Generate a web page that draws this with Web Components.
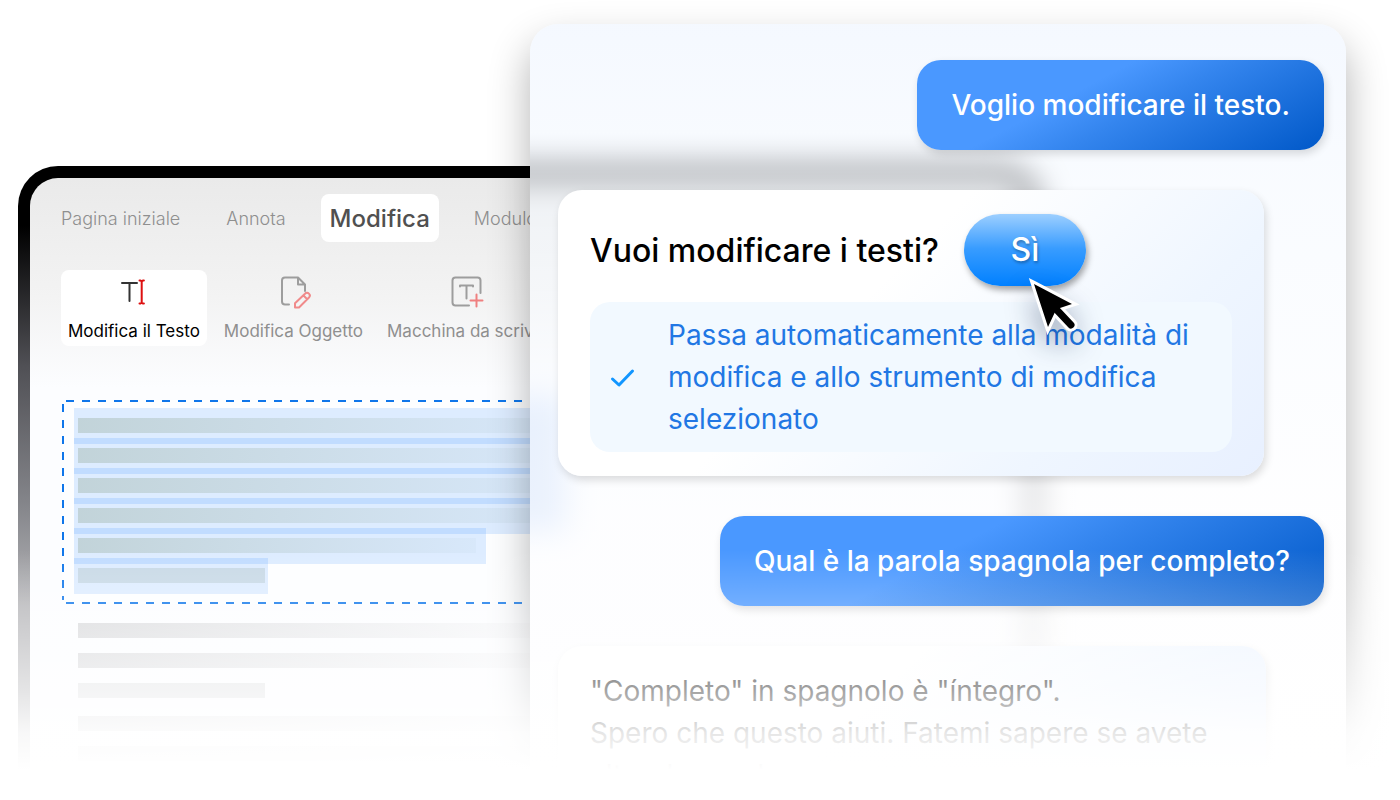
<!DOCTYPE html>
<html lang="it">
<head>
<meta charset="utf-8">
<meta name="viewport" content="width=device-width, initial-scale=1">
<title>Assistente PDF</title>
<style>
    body {
        margin: 0;
        background: #fff;
        font-family: Inter, "Liberation Sans", sans-serif;
    }
</style>
</head>
<body>
<promo-stage>
    <tablet-frame slot="device">
        <ribbon-tab slot="tabs">Pagina iniziale</ribbon-tab>
        <ribbon-tab slot="tabs">Annota</ribbon-tab>
        <ribbon-tab slot="tabs" active>Modifica</ribbon-tab>
        <ribbon-tab slot="tabs">Modulo</ribbon-tab>

        <tool-button slot="tools" icon="text" active>Modifica il Testo</tool-button>
        <tool-button slot="tools" icon="object">Modifica Oggetto</tool-button>
        <tool-button slot="tools" icon="typewriter">Macchina da scrivere</tool-button>

        <page-preview></page-preview>
    </tablet-frame>

    <chat-panel slot="chat">
        <chat-bubble>Voglio modificare il testo.</chat-bubble>
        <confirm-card action="Sì">
            <span slot="question">Vuoi modificare i testi?</span>
            Passa automaticamente alla modalità di modifica e allo strumento di modifica selezionato
        </confirm-card>
        <chat-bubble>Qual è la parola spagnola per completo?</chat-bubble>
        <chat-answer>"Completo" in spagnolo è "íntegro".<br>Spero che questo aiuti. Fatemi sapere se avete altre domande.</chat-answer>
    </chat-panel>
</promo-stage>

<script>
class BaseElement extends HTMLElement {
    constructor() {
        super();
        this.attachShadow({ mode: "open" });
    }

    connectedCallback() {
        this.shadowRoot.innerHTML = this.template();
    }
}

// Tablet and chat share one grid row and overlap in the middle column
class PromoStage extends BaseElement {
    template() {
        return `
            <style>
                :host {
                    display: grid;
                    grid-template-columns: 18px 512fr 510fr 306fr 54px;
                    grid-template-rows: minmax(0, 1fr);
                    height: 100vh;
                    overflow: hidden;
                }
                slot[name="device"]::slotted(*) {
                    grid-area: 1 / 2 / 2 / 4;
                    margin-top: 166px;
                }
                slot[name="chat"]::slotted(*) {
                    grid-area: 1 / 3 / 2 / 5;
                    margin-top: 24px;
                }
                .fade {
                    grid-area: 1 / 1 / 2 / -1;
                    align-self: end;
                    z-index: 2;
                    height: 250px;
                    pointer-events: none;
                    background: linear-gradient(
                        rgba(255, 255, 255, 0),
                        rgba(255, 255, 255, .22) 22%,
                        rgba(255, 255, 255, .64) 56%,
                        rgba(255, 255, 255, .9) 73%,
                        #fff 88%);
                }
            </style>
            <slot name="device"></slot>
            <slot name="chat"></slot>
            <div class="fade"></div>
        `;
    }
}

class TabletFrame extends BaseElement {
    template() {
        return `
            <style>
                :host {
                    display: block;
                    box-sizing: border-box;
                    min-width: 0;
                    padding: 12px 12px 0;
                    border-radius: 40px 40px 0 0;
                    background: linear-gradient(#000 60px, #505055 200px, #85868b 340px, #b5b5b8 440px);
                }
                .screen {
                    box-sizing: border-box;
                    height: 100%;
                    padding: 16px 32px 0 31px;
                    overflow: hidden;
                    border-radius: 28px 28px 0 0;
                    background: linear-gradient(#eaeaea, #f3f3f3 120px, #fcfdff 210px);
                }
                nav, .tools {
                    display: flex;
                    white-space: nowrap;
                }
                nav {
                    gap: 24px;
                    margin-left: -11px;
                }
                .tools {
                    gap: 10px;
                    margin: 28px 0 54px;
                }
            </style>
            <div class="screen">
                <nav><slot name="tabs"></slot></nav>
                <div class="tools"><slot name="tools"></slot></div>
                <slot></slot>
            </div>
        `;
    }
}

class RibbonTab extends BaseElement {
    template() {
        return `
            <style>
                :host { display: block; }
                button {
                    display: block;
                    padding: 2px 11px 0;
                    border: 0;
                    background: none;
                    color: #8f8f8f;
                    font: 300 18px/46px Inter, "Liberation Sans", sans-serif;
                }
                :host([active]) button {
                    padding: 2px 9px 0;
                    border-radius: 8px;
                    background: #fff;
                    color: #505050;
                    font-size: 24px;
                    font-weight: 500;
                }
            </style>
            <button type="button"><slot></slot></button>
        `;
    }
}

const TOOL_ICONS = {
    text: `
        <path d="M6 9h15M13.500 9v18" stroke="#333"/>
        <path d="M23.500 6.500h1l1.200 1 1.200-1h1M25.700 7.500v21M23.500 29.500h1l1.200-1 1.200 1h1" stroke="#dd1010"/>`,
    object: `
        <path d="M14 30.500h-4a3 3 0 0 1-3-3V6.500a3 3 0 0 1 3-3h13l7 7V17M23 3.500v7h7" stroke="#9d9d9d"/>
        <path d="M20 33.500v-4.200l10-9.600a2.700 2.700 0 0 1 4 3.800L24 33.500zM28.500 21.500l3.500 3.500" stroke="#f08a8a"/>`,
    typewriter: `
        <path d="M20 31.500H6.500a3 3 0 0 1-3-3V6.500a3 3 0 0 1 3-3h22a3 3 0 0 1 3 3V19" stroke="#9d9d9d"/>
        <path d="M11 12.500v-1h13v1M17.500 11.500v13" stroke="#9d9d9d"/>
        <path d="M27.500 20.500v12M21.500 26.500h12" stroke="#ef8080"/>`
};

class ToolButton extends BaseElement {
    template() {
        return `
            <style>
                :host { display: block; }
                button {
                    display: flex;
                    flex-direction: column;
                    align-items: center;
                    gap: 11px;
                    padding: 4px 7px 5px;
                    border: 0;
                    border-radius: 8px;
                    background: none;
                    color: #8f8f8f;
                    font: 400 17px/20px Inter, "Liberation Sans", sans-serif;
                }
                :host([active]) button {
                    background: #fff;
                    color: #000;
                }
                span {
                    max-width: 160px;
                    overflow: hidden;
                }
                svg {
                    width: 36px;
                    height: 36px;
                    fill: none;
                    stroke-width: 2;
                    stroke-linecap: round;
                    stroke-linejoin: round;
                }
            </style>
            <button type="button">
                <svg viewBox="0 0 36 36" aria-hidden="true">${TOOL_ICONS[this.getAttribute("icon")] || ""}</svg>
                <span><slot></slot></span>
            </button>
        `;
    }
}

// Placeholder page: a selected paragraph, then plain ones
class PagePreview extends BaseElement {
    template() {
        const selected = ["full", "full", "full", "full", "long", "short"];
        const plain = ["full", "full", "short", "full gap", "full"];

        return `
            <style>
                :host { display: block; }
                .selection {
                    width: 54%;
                    box-sizing: border-box;
                    margin-left: 1px;
                    padding: 8px 0 10px 12px;
                    background:
                        repeating-linear-gradient(90deg, #0f76ea 0 8px, transparent 8px 16px) 4px 0 / 100% 2px no-repeat,
                        repeating-linear-gradient(90deg, #0f76ea 0 8px, transparent 8px 16px) 4px 100% / 100% 2px no-repeat,
                        repeating-linear-gradient(#0f76ea 0 8px, transparent 8px 16px) 0 4px / 2px calc(100% - 8px) no-repeat,
                        #fdfeff;
                }
                .line {
                    box-sizing: border-box;
                    height: 36px;
                    margin-top: -6px;
                    padding: 10px 0 11px 4px;
                    background: rgba(0, 111, 255, .127);
                }
                .line:first-child { margin-top: 0; }
                .line.long { width: 412px; padding-right: 10px; }
                .line.short { width: 194px; padding-right: 3px; }
                .line i {
                    display: block;
                    height: 15px;
                    background: linear-gradient(100deg, rgba(60, 90, 30, .17), rgba(60, 110, 110, .03));
                }
                .line.short i { background: rgba(60, 90, 60, .13); }
                .plain {
                    display: grid;
                    gap: 15px;
                    width: 54%;
                    margin: 19px 0 0 17px;
                }
                .plain i {
                    height: 15px;
                    background: linear-gradient(95deg, rgba(30, 30, 34, .16), rgba(30, 30, 34, 0));
                }
                .plain .short {
                    width: 187px;
                    background: rgba(30, 30, 34, .12);
                }
                .plain .gap { margin-top: 3px; }
            </style>
            <div class="selection">
                ${selected.map(w => `<div class="line ${w}"><i></i></div>`).join("")}
            </div>
            <div class="plain">
                ${plain.map(w => `<i class="${w}"></i>`).join("")}
            </div>
        `;
    }
}

class ChatPanel extends BaseElement {
    template() {
        return `
            <style>
                :host {
                    display: flex;
                    flex-direction: column;
                    gap: 40px;
                    position: relative;
                    z-index: 1;
                    box-sizing: border-box;
                    min-width: 0;
                    padding: 36px 22px 0 28px;
                    border-radius: 28px 28px 0 0;
                    background: #fff;
                    box-shadow: 0 20px 40px rgba(0, 0, 0, .3);
                }
                /* frosted glass: a blurred outline of the tablet under a tint */
                .glass {
                    position: absolute;
                    z-index: -1;
                    inset: 0;
                    overflow: hidden;
                    border-radius: inherit;
                }
                .ghost {
                    position: absolute;
                    inset: 142px 37.5% -60px -60px;
                    padding: 12px 12px 0 0;
                    border-radius: 0 40px 0 0;
                    background: linear-gradient(#000 60px, #505055 200px, #85868b 340px, #b5b5b8 440px);
                    filter: blur(15px);
                }
                .screen {
                    height: 100%;
                    border-radius: 0 28px 0 0;
                    background: linear-gradient(#eaeaea, #f3f3f3 120px, #fcfdff 210px);
                }
                .mark {
                    position: absolute;
                    top: 230px;
                    left: 0;
                    width: 96px;
                    height: 136px;
                    background: #cfe0fb;
                }
                .tint {
                    position: absolute;
                    inset: 0;
                    background: linear-gradient(rgba(232, 241, 255, .45), rgba(243, 248, 255, .5) 160px, rgba(248, 251, 255, .58) 300px, rgba(254, 254, 255, .6) 500px);
                }
            </style>
            <div class="glass">
                <div class="ghost">
                    <div class="screen"></div>
                    <div class="mark"></div>
                </div>
                <div class="tint"></div>
            </div>
            <slot></slot>
        `;
    }
}

class ChatBubble extends BaseElement {
    template() {
        return `
            <style>
                :host {
                    display: block;
                    align-self: flex-end;
                    padding: 24px 34px;
                    border-radius: 24px;
                    background: linear-gradient(152deg, #4a98ff 38%, #3485ee 55%, #0058c8);
                    box-shadow: 2px 4px 8px rgba(0, 0, 0, .14);
                    color: #fff;
                    font-size: 28px;
                    font-weight: 500;
                    line-height: 42px;
                }
            </style>
            <slot></slot>
        `;
    }
}

class ConfirmCard extends BaseElement {
    template() {
        return `
            <style>
                :host {
                    display: grid;
                    gap: 16px;
                    margin-right: 60px;
                    padding: 24px 32px;
                    border-radius: 24px;
                    background: linear-gradient(135deg, #fff 42%, #eff6ff 75%, #e8f0ff);
                    box-shadow: 2px 4px 8px rgba(0, 0, 0, .14);
                }
                .ask {
                    display: flex;
                    align-items: center;
                    gap: 25px;
                    color: #000;
                    font-size: 32px;
                    font-weight: 500;
                    white-space: nowrap;
                }
                .anchor {
                    position: relative;
                    z-index: 1;
                }
                button {
                    display: block;
                    width: 122px;
                    height: 72px;
                    padding: 0;
                    border: 0;
                    border-radius: 36px;
                    background: linear-gradient(#9dcfff, #389cff 48%, #0080ff);
                    box-shadow: 2px 4px 6px rgba(0, 0, 0, .35);
                    color: #fff;
                    font: 500 32px/72px Inter, "Liberation Sans", sans-serif;
                    text-shadow: 1px 2px 3px rgba(0, 0, 0, .3);
                }
                .pointer {
                    position: absolute;
                    top: 63px;
                    left: 64px;
                    width: 60px;
                    height: 64px;
                    overflow: visible;
                    filter: drop-shadow(0 14px 14px rgba(0, 20, 60, .35));
                }
                .note {
                    display: flex;
                    align-items: center;
                    gap: 32px;
                    padding: 12px 32px 12px 20px;
                    border-radius: 20px;
                    background: #f2f9ff;
                    color: #2177e4;
                    font-size: 28px;
                    line-height: 42px;
                }
                .note svg {
                    flex: none;
                    width: 26px;
                    height: 26px;
                }
            </style>
            <div class="ask">
                <slot name="question"></slot>
                <div class="anchor">
                    <button type="button">${this.getAttribute("action")}</button>
                    <svg class="pointer" viewBox="0 0 60 64" aria-hidden="true">
                        <g fill="#fff" stroke="#fff">
                            <path d="M6 7L44 27L32 31L27 35L20 50Z" stroke-width="6"/>
                            <path d="M27 31L43 48" stroke-width="13" stroke-linecap="round"/>
                        </g>
                        <path d="M6 7L44 27L32 31L27 35L20 50Z"/>
                        <path d="M27 31L43 48" stroke="#000" stroke-width="7" stroke-linecap="round"/>
                    </svg>
                </div>
            </div>
            <div class="note">
                <svg viewBox="0 0 26 26" fill="none" stroke="#1296ff" stroke-width="3" stroke-linecap="round" stroke-linejoin="round" aria-hidden="true">
                    <path d="M2.500 15L9 21L22.500 7"/>
                </svg>
                <span><slot></slot></span>
            </div>
        `;
    }
}

class ChatAnswer extends BaseElement {
    template() {
        return `
            <style>
                :host {
                    display: block;
                    margin-right: 58px;
                    padding: 24px 32px;
                    border-radius: 24px;
                    background: linear-gradient(135deg, #fff 42%, #eff6ff 75%, #e8f0ff);
                    box-shadow: 2px 4px 8px rgba(0, 0, 0, .1);
                    color: #000;
                    font-size: 28px;
                    line-height: 42px;
                }
            </style>
            <slot></slot>
        `;
    }
}

customElements.define("promo-stage", PromoStage);
customElements.define("tablet-frame", TabletFrame);
customElements.define("ribbon-tab", RibbonTab);
customElements.define("tool-button", ToolButton);
customElements.define("page-preview", PagePreview);
customElements.define("chat-panel", ChatPanel);
customElements.define("chat-bubble", ChatBubble);
customElements.define("confirm-card", ConfirmCard);
customElements.define("chat-answer", ChatAnswer);
</script>
</body>
</html>
